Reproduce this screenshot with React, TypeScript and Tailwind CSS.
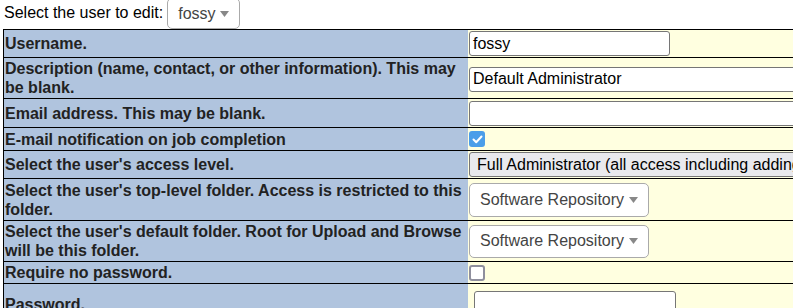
import React from 'react';

const Caret = () => (
  <svg width="9" height="6" viewBox="0 0 9 6" className="shrink-0">
    <path d="M0 0 L9 0 L4.5 6 Z" fill="#888" />
  </svg>
);

function FancySelect({ value, width, height }: { value: string; width: string; height: string }) {
  return (
    <div
      className={`${width} ${height} flex items-center justify-between pl-[10px] pr-[10px] bg-white border border-[#aaa] rounded-[5px] text-[#444] text-[16px]`}
    >
      <span className="whitespace-nowrap">{value}</span>
      <Caret />
    </div>
  );
}

const TextBox = ({ value, className }: { value?: string; className: string }) => (
  <div
    className={`${className} h-[25px] flex items-center px-[3px] bg-white border border-[#767676] rounded-[3px] text-[16px] text-black whitespace-nowrap overflow-hidden`}
  >
    {value}
  </div>
);

const CheckBox = ({ checked }: { checked: boolean }) =>
  checked ? (
    <div className="w-[16px] h-[16px] rounded-[3px] bg-[#4b9ee9] flex items-center justify-center">
      <svg width="11" height="9" viewBox="0 0 11 9">
        <path d="M1.5 4.5 L4.2 7.2 L9.5 1.5" stroke="white" strokeWidth="2" fill="none" strokeLinecap="round" strokeLinejoin="round" />
      </svg>
    </div>
  ) : (
    <div className="w-[16px] h-[16px] rounded-[3px] bg-white border-2 border-[#8f8f9d]" />
  );

const rows: { label: string; h: string; field: React.ReactNode }[] = [
  { label: 'Username.', h: 'h-[27px]', field: <TextBox value="fossy" className="w-[201px]" /> },
  {
    label: 'Description (name, contact, or other information). This may be blank.',
    h: 'h-[40px]',
    field: <TextBox value="Default Administrator" className="w-[360px] mt-[2px]" />
  },
  { label: 'Email address. This may be blank.', h: 'h-[28px]', field: <TextBox className="w-[360px] mt-[1px]" /> },
  { label: 'E-mail notification on job completion', h: 'h-[22px]', field: <CheckBox checked /> },
  {
    label: "Select the user's access level.",
    h: 'h-[27px]',
    field: (
      <div className="w-[360px] h-[25px] flex items-center pl-[7px] bg-[#e9e9ed] border border-[#767676] rounded-[3px] text-[16px] text-black whitespace-nowrap overflow-hidden">
        Full Administrator (all access including adding and deleting users)
      </div>
    )
  },
  {
    label: "Select the user's top-level folder. Access is restricted to this folder.",
    h: 'h-[41px]',
    field: <FancySelect value="Software Repository" width="w-[180px]" height="h-[34px]" />
  },
  {
    label: "Select the user's default folder. Root for Upload and Browse will be this folder.",
    h: 'h-[40px]',
    field: <FancySelect value="Software Repository" width="w-[180px]" height="h-[33px]" />
  },
  { label: 'Require no password.', h: 'h-[21px]', field: <CheckBox checked={false} /> },
  {
    label: 'Password.',
    h: 'h-[40px]',
    field: <TextBox className="w-[202px] ml-[5px] self-start mt-[7px]" />
  }
];

export default function App() {
  return (
    <div className="w-[793px] h-[308px] overflow-hidden bg-white font-['Liberation_Sans',Arial,sans-serif] text-[16px]">
      <div className="h-[29px] flex pl-[4px]">
        <span className="mt-[1px] text-black">Select the user to edit:</span>
        <div className="ml-[4px] self-end">
          <div className="w-[73px] h-[31px] flex items-center justify-between pl-[10px] pr-[10px] bg-white border border-[#aaa] rounded-[5px] text-[#444]">
            <span>fossy</span>
            <Caret />
          </div>
        </div>
      </div>
      <div className="ml-[3px] border-t border-black">
        {rows.map((row, i) => (
          <div key={i} className="flex border-b border-black">
            <div
              className={`${row.h} w-[465px] shrink-0 border-l border-black bg-[#b0c4de] pl-[1px] flex items-center font-bold text-[#222] leading-[19px]`}
            >
              <span>{row.label}</span>
            </div>
            <div className={`${row.h} flex-1 bg-[#ffffe0] pl-[1px] flex items-center`}>{row.field}</div>
          </div>
        ))}
      </div>
    </div>
  );
}
